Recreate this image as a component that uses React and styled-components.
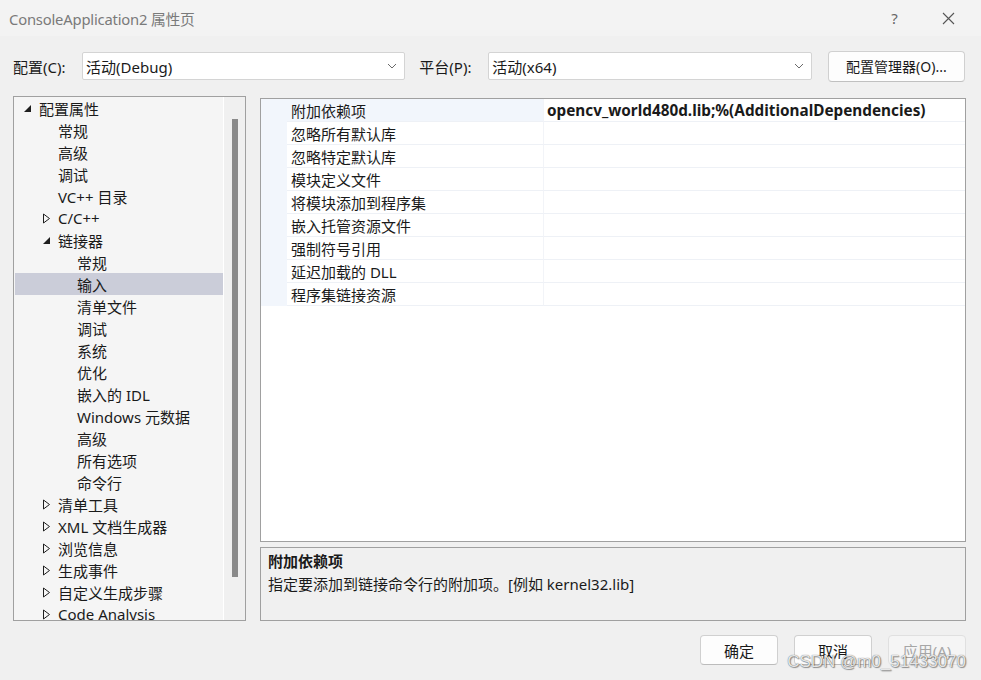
import React from 'react'
import styled, { createGlobalStyle } from 'styled-components'

const Global = createGlobalStyle`
  html, body { margin: 0; padding: 0; background: #f0f0f0; }
  * { box-sizing: border-box; }
  body { font-family: "Noto Sans", "Noto Sans CJK SC", sans-serif; }
`

const FONT = `"Noto Sans", "Noto Sans CJK SC", sans-serif`

const treeItems = [
  { label: '配置属性', level: 0, arrow: 'open' },
  { label: '常规', level: 1 },
  { label: '高级', level: 1 },
  { label: '调试', level: 1 },
  { label: 'VC++ 目录', level: 1 },
  { label: 'C/C++', level: 1, arrow: 'closed' },
  { label: '链接器', level: 1, arrow: 'open' },
  { label: '常规', level: 2 },
  { label: '输入', level: 2, selected: true },
  { label: '清单文件', level: 2 },
  { label: '调试', level: 2 },
  { label: '系统', level: 2 },
  { label: '优化', level: 2 },
  { label: '嵌入的 IDL', level: 2 },
  { label: 'Windows 元数据', level: 2 },
  { label: '高级', level: 2 },
  { label: '所有选项', level: 2 },
  { label: '命令行', level: 2 },
  { label: '清单工具', level: 1, arrow: 'closed' },
  { label: 'XML 文档生成器', level: 1, arrow: 'closed' },
  { label: '浏览信息', level: 1, arrow: 'closed' },
  { label: '生成事件', level: 1, arrow: 'closed' },
  { label: '自定义生成步骤', level: 1, arrow: 'closed' },
  { label: 'Code Analysis', level: 1, arrow: 'closed' },
]

const props = [
  { name: '附加依赖项', value: 'opencv_world480d.lib;%(AdditionalDependencies)', active: true },
  { name: '忽略所有默认库' },
  { name: '忽略特定默认库' },
  { name: '模块定义文件' },
  { name: '将模块添加到程序集' },
  { name: '嵌入托管资源文件' },
  { name: '强制符号引用' },
  { name: '延迟加载的 DLL' },
  { name: '程序集链接资源' },
]

const Arrow = ({ kind }) =>
  kind === 'open' ? (
    <svg width="9" height="9" viewBox="0 0 9 9">
      <polygon points="8,1 8,8 1,8" fill="#1e1e1e" />
    </svg>
  ) : (
    <svg width="9" height="11" viewBox="0 0 9 11">
      <polygon points="1.5,1 7.5,5.5 1.5,10" fill="none" stroke="#1e1e1e" strokeWidth="1" />
    </svg>
  )

const Chevron = () => (
  <svg width="10" height="6" viewBox="0 0 10 6">
    <polyline points="1,1 5,5 9,1" fill="none" stroke="#6a6a6a" strokeWidth="1" />
  </svg>
)

const App = () => {
  return (
    <>
      <Global />
      <Window>
        <TitleBar>
          <Title>ConsoleApplication2 属性页</Title>
          <TitleButtons>
            <TitleBtn>?</TitleBtn>
            <TitleBtn close>
              <svg width="13" height="13" viewBox="0 0 13 13">
                <path d="M1 1 L12 12 M12 1 L1 12" stroke="#555" strokeWidth="1.1" />
              </svg>
            </TitleBtn>
          </TitleButtons>
        </TitleBar>

        <Toolbar>
          <Label>配置(C):</Label>
          <Combo>
            <span>活动(Debug)</span>
            <Chevron />
          </Combo>
          <Label second>平台(P):</Label>
          <Combo>
            <span>活动(x64)</span>
            <Chevron />
          </Combo>
          <ManagerButton>配置管理器(O)...</ManagerButton>
        </Toolbar>

        <Main>
          <TreePanel>
            <TreeList>
              {treeItems.map((it, i) => (
                <TreeRow key={i} level={it.level} selected={it.selected}>
                  <ArrowBox>{it.arrow && <Arrow kind={it.arrow} />}</ArrowBox>
                  <span>{it.label}</span>
                </TreeRow>
              ))}
            </TreeList>
            <ScrollTrack>
              <ScrollThumb />
            </ScrollTrack>
          </TreePanel>

          <RightCol>
            <Grid>
              {props.map((p, i) => (
                <GridRow key={i}>
                  <Gutter />
                  <NameCell active={p.active}>{p.name}</NameCell>
                  <ValueCell>{p.value}</ValueCell>
                </GridRow>
              ))}
            </Grid>
            <Desc>
              <DescTitle>附加依赖项</DescTitle>
              <DescText>指定要添加到链接命令行的附加项。[例如 kernel32.lib]</DescText>
            </Desc>
          </RightCol>
        </Main>

        <Footer>
          <DlgButton>确定</DlgButton>
          <DlgButton>取消</DlgButton>
          <DlgButton disabled>应用(A)</DlgButton>
          <Watermark>CSDN @m0_51433070</Watermark>
        </Footer>
      </Window>
    </>
  )
}

export default App

const Window = styled.div`
  width: 981px;
  height: 680px;
  background: #f0f0f0;
  display: flex;
  flex-direction: column;
  font-family: ${FONT};
  color: #1a1a1a;
  overflow: hidden;
`

const TitleBar = styled.div`
  height: 36px;
  background: #f3f3f3;
  display: flex;
  align-items: center;
  justify-content: space-between;
  padding-left: 9px;
`

const Title = styled.div`
  font-size: 14.8px;
  color: #7a7a7a;
  letter-spacing: -0.2px;
`

const TitleButtons = styled.div`
  display: flex;
  height: 100%;
`

const TitleBtn = styled.div`
  width: ${(p) => (p.close ? '60px' : '50px')};
  display: flex;
  align-items: center;
  justify-content: center;
  font-size: 15px;
  color: #666;
  padding-right: ${(p) => (p.close ? '6px' : '3px')};
`

const Toolbar = styled.div`
  height: 60px;
  display: flex;
  align-items: center;
  padding: 0 16px 0 13px;
`

const Label = styled.div`
  font-size: 15px;
  margin-left: ${(p) => (p.second ? '14px' : '0')};
  width: 69px;
  flex-shrink: 0;
`

const Combo = styled.div`
  width: 325px;
  height: 28px;
  background: #fff;
  border: 1px solid #d4d4d4;
  border-radius: 2px;
  display: flex;
  align-items: center;
  justify-content: space-between;
  padding: 0 7px 0 3px;
  font-size: 15px;
`

const ManagerButton = styled.div`
  margin-left: 16px;
  width: 138px;
  height: 31px;
  background: #fdfdfd;
  border: 1px solid #d0d0d0;
  border-bottom-color: #c0c0c0;
  border-radius: 4px;
  display: flex;
  align-items: center;
  justify-content: center;
  font-size: 14px;
`

const Main = styled.div`
  flex: 1;
  display: flex;
  padding: 0 15px 0 13px;
  gap: 14px;
  min-height: 0;
`

const TreePanel = styled.div`
  width: 233px;
  height: 525px;
  border: 1px solid #a0a0a0;
  background: #f5f5f5;
  display: flex;
  overflow: hidden;
`

const TreeList = styled.div`
  flex: 1;
  padding-left: 1px;
  overflow: hidden;
`

const TreeRow = styled.div`
  height: 22px;
  display: flex;
  align-items: center;
  padding-left: ${(p) => p.level * 19}px;
  background: ${(p) => (p.selected ? '#cbcdd9' : 'transparent')};
  font-size: 15px;
  white-space: nowrap;

  span {
    padding-left: 4px;
  }
`

const ArrowBox = styled.div`
  width: 20px;
  display: flex;
  align-items: center;
  justify-content: flex-end;
  padding-right: 3px;
`

const ScrollTrack = styled.div`
  width: 22px;
  border-left: 1px solid #ffffff;
  background: #f0f0f0;
  padding: 22px 0 0 8px;
`

const ScrollThumb = styled.div`
  width: 6px;
  height: 458px;
  background: #8a8a8a;
`

const RightCol = styled.div`
  flex: 1;
  display: flex;
  flex-direction: column;
  gap: 5px;
  padding-top: 2px;
`

const Grid = styled.div`
  height: 447px;
  border: 1px solid #a0a0a0;
  background: #fff;
  overflow: hidden;
`

const GridRow = styled.div`
  height: 23px;
  display: flex;
`

const Gutter = styled.div`
  width: 26px;
  background: #f2f6fc;
`

const NameCell = styled.div`
  width: 257px;
  display: flex;
  align-items: center;
  padding-left: 4px;
  font-size: 15px;
  background: ${(p) => (p.active ? '#f2f6fc' : '#fff')};
  border-bottom: 1px solid #eef1f6;
  border-right: 1px solid #f2f4f8;
`

const ValueCell = styled.div`
  flex: 1;
  display: flex;
  align-items: center;
  padding-left: 3px;
  font-size: 15.3px;
  font-weight: 700;
  border-bottom: 1px solid #eef1f6;
  white-space: nowrap;
`

const Desc = styled.div`
  height: 74px;
  border: 1px solid #a0a0a0;
  background: #f0f0f0;
  padding: 2px 7px;
`

const DescTitle = styled.div`
  font-size: 15px;
  font-weight: 700;
  line-height: 23px;
`

const DescText = styled.div`
  font-size: 15px;
  line-height: 23px;
`

const Footer = styled.div`
  position: relative;
  height: 59px;
  display: flex;
  justify-content: flex-end;
  align-items: flex-start;
  gap: 16px;
  padding: 14px 15px 0 0;
`

const DlgButton = styled.div`
  width: 78px;
  height: 30px;
  background: ${(p) => (p.disabled ? '#f5f5f5' : '#fdfdfd')};
  border: 1px solid ${(p) => (p.disabled ? '#e0e0e0' : '#d0d0d0')};
  border-bottom-color: ${(p) => (p.disabled ? '#e0e0e0' : '#bcbcbc')};
  border-radius: 4px;
  display: flex;
  align-items: center;
  justify-content: center;
  font-size: 15px;
  color: ${(p) => (p.disabled ? '#a6a6a6' : '#1a1a1a')};
`

const Watermark = styled.div`
  position: absolute;
  right: 15px;
  top: 31px;
  font-family: "Liberation Sans", sans-serif;
  font-size: 17px;
  line-height: 20px;
  color: rgba(255, 255, 255, 0.85);
  text-shadow: 0 0 1px rgba(60, 60, 60, 0.9), 1px 1px 1px rgba(60, 60, 60, 0.5);
`
